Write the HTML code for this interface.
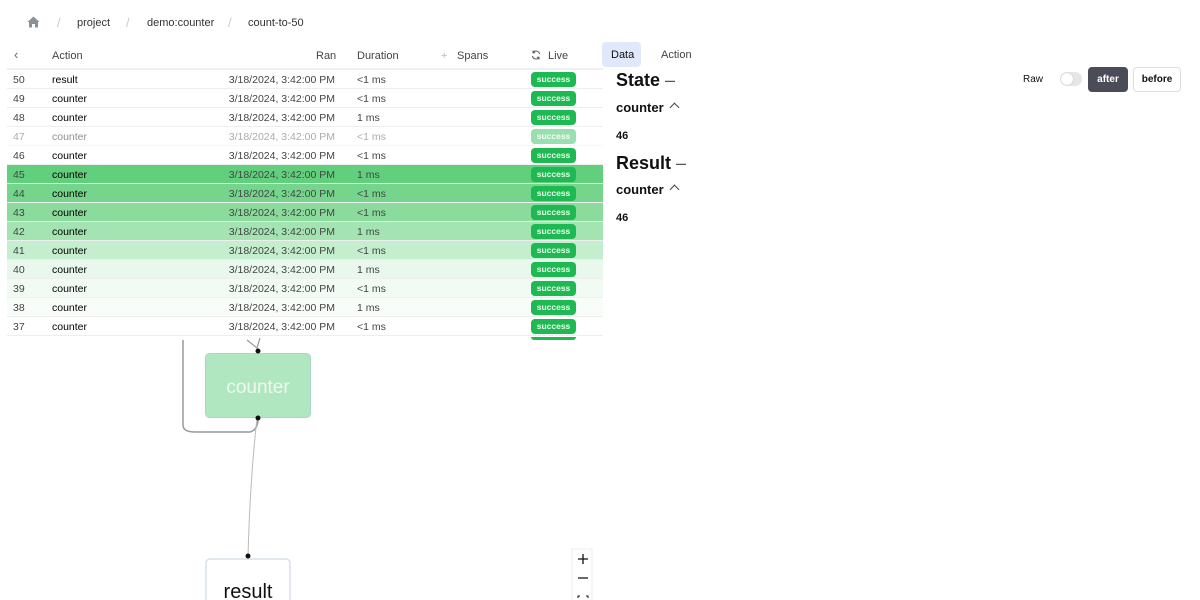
<!DOCTYPE html>
<html><head><meta charset="utf-8"><style>
*{margin:0;padding:0;box-sizing:border-box}
body{width:1200px;height:600px;overflow:hidden;background:#fff;font-family:"Liberation Sans",sans-serif;position:relative;color:#111}
.a{position:absolute;white-space:nowrap}
.bc{font-size:11px;color:#333;top:17px}
.sl{color:#ccc;font-size:13px;top:15px}
.hd{top:50px;font-size:11px;color:#444}
.row{position:absolute;left:7px;width:596px;height:19px;border-bottom:1px solid #eee;font-size:10.5px}
.row span{position:absolute;top:4px}
.n{left:6px;color:#444}.ac{left:45px;color:#000}.rn{right:268px;color:#444}.du{left:350px;color:#444}
.bd{left:524px;top:2px!important;width:45px;height:15px;background:#1fb954;color:#e8ffe8;border-radius:4px;font-size:8.5px;font-weight:bold;text-align:center;line-height:15px}
.chev{display:inline-block;width:7px;height:7px;border-left:1.3px solid #444;border-top:1.3px solid #444;transform:rotate(45deg);margin-left:7px;vertical-align:1px}
</style></head><body>
<svg class="a" style="left:27px;top:16px" width="13" height="12" viewBox="0 0 13 12"><path d="M6.5 0.5L0.5 6H2V11.5H5V8H8V11.5H11V6H12.5Z" fill="#8a8f98"/></svg>
<span class="a sl" style="left:57px">/</span>
<span class="a bc" style="left:77px">project</span>
<span class="a sl" style="left:126px">/</span>
<span class="a bc" style="left:147px">demo:counter</span>
<span class="a sl" style="left:228px">/</span>
<span class="a bc" style="left:248px">count-to-50</span>

<span class="a hd" style="left:14px;top:47px;font-size:13px;color:#666">‹</span>
<span class="a hd" style="left:52px">Action</span>
<span class="a hd" style="left:316px">Ran</span>
<span class="a hd" style="left:357px">Duration</span>
<span class="a hd" style="left:441px;color:#bbb">+</span>
<span class="a hd" style="left:457px">Spans</span>
<svg class="a" style="left:531px;top:50px" width="10" height="10" viewBox="0 0 10 10"><path d="M8.5 4A3.6 3.6 0 0 0 2 2.5M1.5 6A3.6 3.6 0 0 0 8 7.5M2 0.5V2.7H4.2M8 9.5V7.3H5.8" fill="none" stroke="#555" stroke-width="1"/></svg>
<span class="a hd" style="left:548px">Live</span>
<div class="a" style="left:7px;top:68px;width:596px;height:2px;background:#f0f0f0"></div>

<div class="row" style="top:70px"><span class="n">50</span><span class="ac">result</span><span class="rn">3/18/2024, 3:42:00 PM</span><span class="du">&lt;1 ms</span><span class="bd">success</span></div>
<div class="row" style="top:89px"><span class="n">49</span><span class="ac">counter</span><span class="rn">3/18/2024, 3:42:00 PM</span><span class="du">&lt;1 ms</span><span class="bd">success</span></div>
<div class="row" style="top:108px"><span class="n">48</span><span class="ac">counter</span><span class="rn">3/18/2024, 3:42:00 PM</span><span class="du">1 ms</span><span class="bd">success</span></div>
<div class="row" style="top:127px;opacity:.45"><span class="n">47</span><span class="ac">counter</span><span class="rn">3/18/2024, 3:42:00 PM</span><span class="du">&lt;1 ms</span><span class="bd">success</span></div>
<div class="row" style="top:146px"><span class="n">46</span><span class="ac">counter</span><span class="rn">3/18/2024, 3:42:00 PM</span><span class="du">&lt;1 ms</span><span class="bd">success</span></div>
<div class="row" style="top:165px;background:#62cf7d"><span class="n">45</span><span class="ac">counter</span><span class="rn">3/18/2024, 3:42:00 PM</span><span class="du">1 ms</span><span class="bd">success</span></div>
<div class="row" style="top:184px;background:#76d58d"><span class="n">44</span><span class="ac">counter</span><span class="rn">3/18/2024, 3:42:00 PM</span><span class="du">&lt;1 ms</span><span class="bd">success</span></div>
<div class="row" style="top:203px;background:#8bdb9d"><span class="n">43</span><span class="ac">counter</span><span class="rn">3/18/2024, 3:42:00 PM</span><span class="du">&lt;1 ms</span><span class="bd">success</span></div>
<div class="row" style="top:222px;background:#a4e3b2"><span class="n">42</span><span class="ac">counter</span><span class="rn">3/18/2024, 3:42:00 PM</span><span class="du">1 ms</span><span class="bd">success</span></div>
<div class="row" style="top:241px;background:#c4eecd"><span class="n">41</span><span class="ac">counter</span><span class="rn">3/18/2024, 3:42:00 PM</span><span class="du">&lt;1 ms</span><span class="bd">success</span></div>
<div class="row" style="top:260px;background:#e8f8ec"><span class="n">40</span><span class="ac">counter</span><span class="rn">3/18/2024, 3:42:00 PM</span><span class="du">1 ms</span><span class="bd">success</span></div>
<div class="row" style="top:279px;background:#f1fbf3"><span class="n">39</span><span class="ac">counter</span><span class="rn">3/18/2024, 3:42:00 PM</span><span class="du">&lt;1 ms</span><span class="bd">success</span></div>
<div class="row" style="top:298px;background:#f8fdf9"><span class="n">38</span><span class="ac">counter</span><span class="rn">3/18/2024, 3:42:00 PM</span><span class="du">1 ms</span><span class="bd">success</span></div>
<div class="row" style="top:317px"><span class="n">37</span><span class="ac">counter</span><span class="rn">3/18/2024, 3:42:00 PM</span><span class="du">&lt;1 ms</span><span class="bd">success</span></div>
<div class="a" style="left:531px;top:337px;width:45px;height:3px;background:#1fb954;border-radius:0 0 3px 3px"></div>

<svg class="a" style="left:0;top:338px" width="600" height="262" viewBox="0 338 600 262">
<path d="M183 340V425Q183 432 195 432H250Q258 430 258 418" fill="none" stroke="#999" stroke-width="1.5"/>
<path d="M247 340L257 348L260 338" fill="none" stroke="#999" stroke-width="1.2"/>
<path d="M257 418Q250 480 248 557" fill="none" stroke="#bbb" stroke-width="1"/>
<rect x="205.5" y="353.5" width="105" height="64" rx="4" fill="#b1e7c0" stroke="#a8d8c0"/>
<text x="258" y="393" font-family="Liberation Sans,sans-serif" font-size="19" fill="#eef9f0" text-anchor="middle">counter</text>
<circle cx="258" cy="351" r="2.5" fill="#111"/><circle cx="258" cy="418" r="2.5" fill="#111"/>
<rect x="206" y="559" width="84" height="50" rx="4" fill="#fff" stroke="#d8e0e8" stroke-width="1.5"/>
<text x="248" y="598" font-family="Liberation Sans,sans-serif" font-size="20" fill="#111" text-anchor="middle">result</text>
<circle cx="248" cy="556" r="2.5" fill="#111"/>
<rect x="572" y="549" width="20" height="60" fill="#fff" stroke="#eee"/>
<path d="M578 559H588M583 554V564M578 578H588" stroke="#111" stroke-width="1.3"/>
<path d="M578 598V596H580M586 596H588V598" stroke="#111" stroke-width="1" fill="none"/>
</svg>

<div class="a" style="left:602px;top:42px;width:39px;height:25px;background:#e0e8fb;border-radius:4px"></div>
<span class="a" style="left:611px;top:49px;font-size:11px;color:#111">Data</span>
<span class="a" style="left:661px;top:49px;font-size:11px;color:#444">Action</span>
<span class="a" style="left:616px;top:70px;font-size:18px;font-weight:bold">State <span style="font-weight:normal;color:#555">–</span></span>
<span class="a" style="left:616px;top:100px;font-size:13px;font-weight:bold">counter<span class="chev"></span></span>
<span class="a" style="left:616px;top:130px;font-size:11px;font-weight:bold">46</span>
<span class="a" style="left:616px;top:153px;font-size:18px;font-weight:bold">Result <span style="font-weight:normal;color:#555">–</span></span>
<span class="a" style="left:616px;top:182px;font-size:13px;font-weight:bold">counter<span class="chev"></span></span>
<span class="a" style="left:616px;top:212px;font-size:11px;font-weight:bold">46</span>
<span class="a" style="left:1023px;top:74px;font-size:10px">Raw</span>
<div class="a" style="left:1060px;top:72px;width:22px;height:14px;border-radius:7px;background:#e6e6e6"><div style="position:absolute;left:1px;top:1px;width:12px;height:12px;border-radius:6px;background:#fff;box-shadow:0 0 1px #999"></div></div>
<div class="a" style="left:1088px;top:67px;width:40px;height:25px;background:#4a4d57;border-radius:4px;color:#fff;font-size:10px;font-weight:bold;text-align:center;line-height:25px">after</div>
<div class="a" style="left:1133px;top:67px;width:48px;height:25px;border:1px solid #ddd;border-radius:4px;font-size:10px;font-weight:bold;text-align:center;line-height:23px">before</div>
</body></html>
